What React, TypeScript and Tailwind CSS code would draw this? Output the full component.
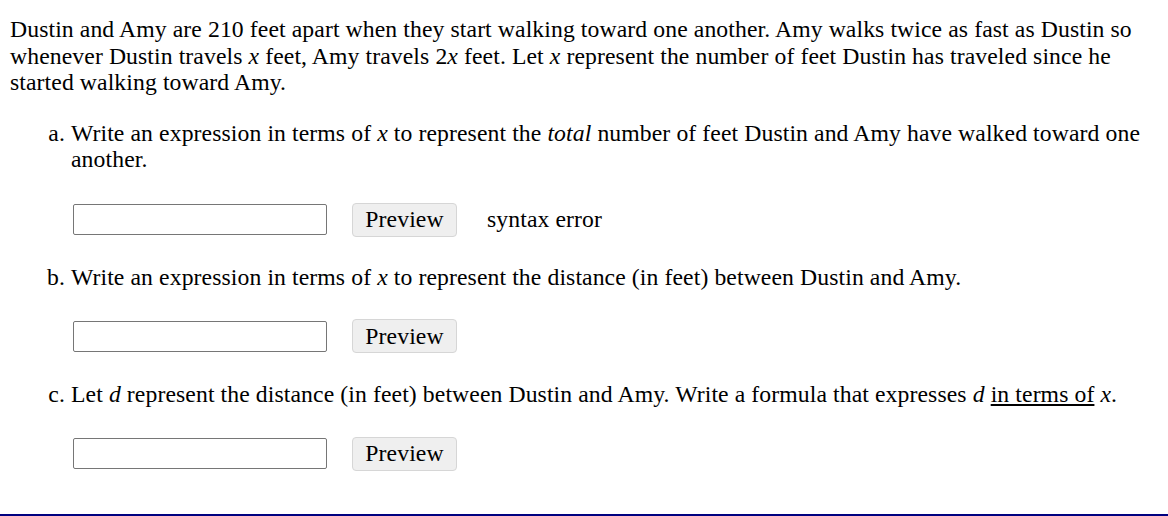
import React from "react";

const X = () => <i className="font-['Liberation_Serif',serif]">x</i>;

function AnswerRow({ error }: { error?: boolean }) {
  return (
    <div className="flex items-center h-[34px] ml-[2px]">
      <div className="w-[254px] h-[31px] border border-[#767676] rounded-[2px] bg-white" />
      <div className="ml-[25px] w-[105px] h-[34px] border border-[#d6d6d6] rounded-[4px] bg-[#efefef] flex items-center justify-center text-[23.7px] text-black">
        Preview
      </div>
      {error && <span className="ml-[30px] text-[23.7px]">syntax error</span>}
    </div>
  );
}

export default function App() {
  return (
    <div className="w-[1168px] h-[516px] bg-white text-black font-['Liberation_Serif',serif] text-[23.7px] leading-[26.5px] tracking-[0.1px] relative overflow-hidden">
      <div className="pl-[10px] pr-[18px] pt-[16px]">
        <p>
          Dustin and Amy are 210 feet apart when they start walking toward one another. Amy walks twice as fast as Dustin so
          whenever Dustin travels <X /> feet, Amy travels 2<X /> feet. Let <X /> represent the number of feet Dustin has traveled since he
          started walking toward Amy.
        </p>
        <ol className="list-[lower-alpha] pl-[61px] mt-[24px]">
          <li>
            <p>
              Write an expression in terms of <X /> to represent the <i>total</i> number of feet Dustin and Amy have walked toward one
              another.
            </p>
            <div className="mt-[30px]">
              <AnswerRow error />
            </div>
          </li>
          <li className="mt-[27px]">
            <p>Write an expression in terms of <X /> to represent the distance (in feet) between Dustin and Amy.</p>
            <div className="mt-[29px]">
              <AnswerRow />
            </div>
          </li>
          <li className="mt-[28px]">
            <p>
              Let <i>d</i> represent the distance (in feet) between Dustin and Amy. Write a formula that expresses <i>d</i>{" "}
              <span className="underline">in terms of</span> <X />.
            </p>
            <div className="mt-[29px]">
              <AnswerRow />
            </div>
          </li>
        </ol>
      </div>
      <div className="absolute left-0 right-0 top-[514px] h-[2px] bg-[#000080]" />
    </div>
  );
}
